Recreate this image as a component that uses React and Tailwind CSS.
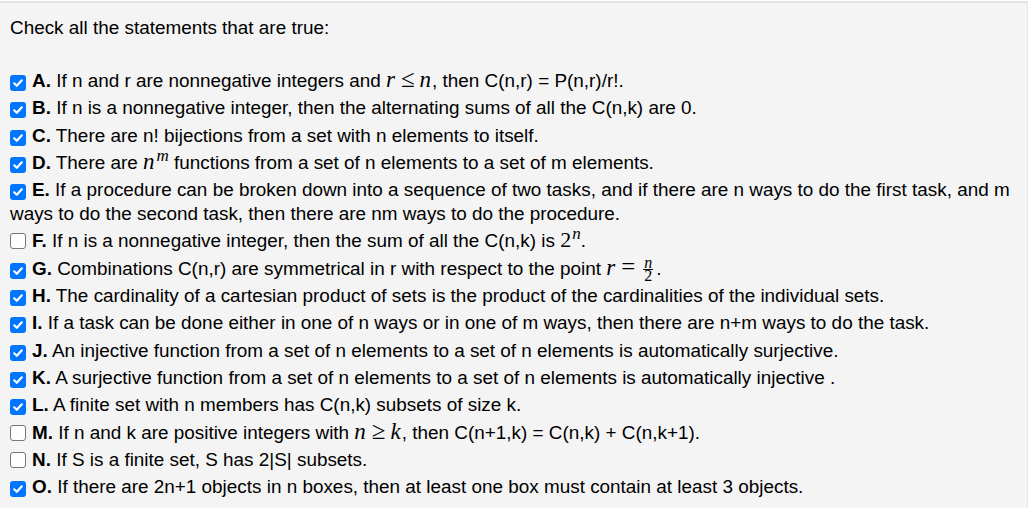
import React from "react";

const Box = ({ checked }) =>
  checked ? (
    <span className="inline-flex items-center justify-center w-[16px] h-[16px] rounded-[3px] bg-[#0075ff] align-[-2px] mr-[6px]">
      <svg width="12" height="12" viewBox="0 0 12 12">
        <path d="M2.2 6.3 L4.8 8.8 L9.8 3.3" fill="none" stroke="#fff" strokeWidth="2.2" strokeLinecap="round" strokeLinejoin="round" />
      </svg>
    </span>
  ) : (
    <span className="inline-block w-[16px] h-[16px] rounded-[3px] bg-white border border-[#767676] align-[-2px] mr-[6px] box-border" />
  );

const serif = { fontFamily: '"Liberation Serif", "DejaVu Serif", serif' };
const M = ({ children }) => (
  <span className="italic text-[23px] leading-[0] tracking-[1px]" style={serif}>
    {children}
  </span>
);
const Rel = ({ children }) => (
  <span className="text-[25px] leading-[0] mx-[5px]" style={serif}>
    {children}
  </span>
);
const S = ({ children }) => (
  <span className="text-[22px] leading-[0]" style={serif}>
    {children}
  </span>
);
const Sup = ({ children }) => (
  <span className="italic text-[17px] leading-[0] relative top-[-8px] ml-[1px]" style={serif}>{children}</span>
);

const items = [
  ["A", true, <>If n and r are nonnegative integers and <M>r</M><Rel>≤</Rel><M>n</M>, then C(n,r) = P(n,r)/r!.</>],
  ["B", true, <>If n is a nonnegative integer, then the alternating sums of all the C(n,k) are 0.</>],
  ["C", true, <>There are n! bijections from a set with n elements to itself.</>],
  ["D", true, <>There are <M>n</M><Sup>m</Sup> functions from a set of n elements to a set of m elements.</>],
  ["E", true, <>If a procedure can be broken down into a sequence of two tasks, and if there are n ways to do the first task, and m ways to do the second task, then there are nm ways to do the procedure.</>],
  ["F", false, <>If n is a nonnegative integer, then the sum of all the C(n,k) is <S>2</S><Sup>n</Sup>.</>],
  ["G", true, <>Combinations C(n,r) are symmetrical in r with respect to the point <M>r</M><Rel>=</Rel>
    <span className="inline-flex flex-col items-center align-middle my-[-8px] leading-[12px] text-[16px] px-[3px]" style={serif}>
      <span className="italic border-b border-black px-[1px]">n</span>
      <span>2</span>
    </span>.</>],
  ["H", true, <>The cardinality of a cartesian product of sets is the product of the cardinalities of the individual sets.</>],
  ["I", true, <>If a task can be done either in one of n ways or in one of m ways, then there are n+m ways to do the task.</>],
  ["J", true, <>An injective function from a set of n elements to a set of n elements is automatically surjective.</>],
  ["K", true, <>A surjective function from a set of n elements to a set of n elements is automatically injective .</>],
  ["L", true, <>A finite set with n members has C(n,k) subsets of size k.</>],
  ["M", false, <>If n and k are positive integers with <M>n</M><Rel>≥</Rel><M>k</M>, then C(n+1,k) = C(n,k) + C(n,k+1).</>],
  ["N", false, <>If S is a finite set, S has 2|S| subsets.</>],
  ["O", true, <>If there are 2n+1 objects in n boxes, then at least one box must contain at least 3 objects.</>],
];

export default function App() {
  return (
    <div className="w-[1028px] h-[508px] bg-white pt-[1px] overflow-hidden">
      <div
        className="h-full bg-[#f4f4f4] border-t-2 border-[#e2e2e2] border-r border-r-[#e8e8e8] px-[10px] text-[18.9px] text-black"
        style={{ fontFamily: '"Liberation Sans", Arial, sans-serif' }}
      >
        <p className="pt-[13px] leading-[24px] mb-[29px]">Check all the statements that are true:</p>
        <div className="flex flex-col">
          {items.map(([l, c, t]) => (
            <div key={l} className="leading-[24px] mb-[3.3px]">
              <Box checked={c} />
              <b>{l}.</b> {t}
            </div>
          ))}
        </div>
      </div>
    </div>
  );
}
